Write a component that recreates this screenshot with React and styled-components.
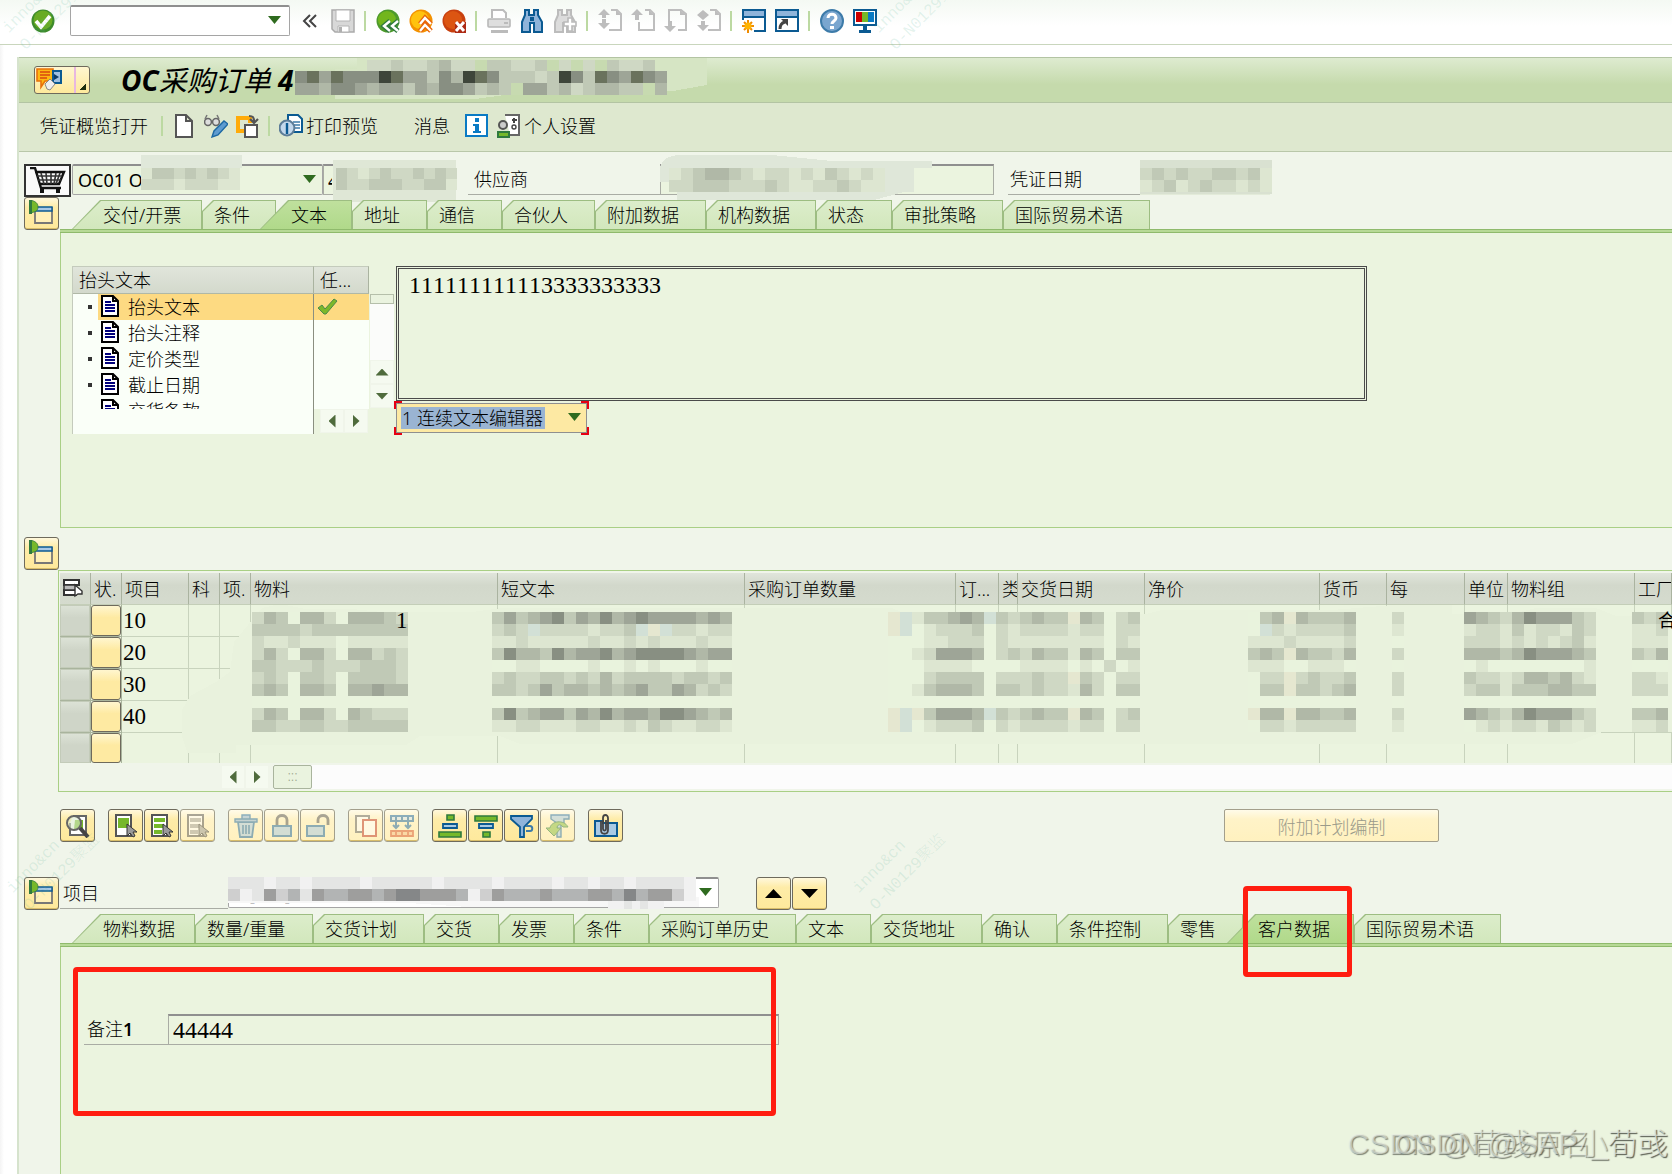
import { useState } from "react";
import styled, { createGlobalStyle, css } from "styled-components";

const headTabs = ["交付/开票", "条件", "文本", "地址", "通信", "合伙人", "附加数据", "机构数据", "状态", "审批策略", "国际贸易术语"];
const headWidths = [130, 74, 92, 75, 75, 93, 111, 110, 76, 111, 147];
const itemTabs = ["物料数据", "数量/重量", "交货计划", "交货", "发票", "条件", "采购订单历史", "文本", "交货地址", "确认", "条件控制", "零售", "客户数据", "国际贸易术语"];
const itemWidths = [123, 118, 111, 75, 75, 75, 147, 75, 111, 75, 111, 75, 127, 147];
const texts = ["抬头文本", "抬头注释", "定价类型", "截止日期", "交货条款"];
const columns = [
    ["项目", 67], ["科", 31], ["项.", 31], ["物料", 247], ["短文本", 247], ["采购订单数量", 211],
    ["订...", 43], ["类", 19], ["交货日期", 127], ["净价", 175], ["货币", 67], ["每", 78], ["单位", 43], ["物料组", 127], ["工厂", 0],
];
const traces = { 物料: ["1", 144], 工厂: ["合", 22] };

const PALETTE = {
    n: "#e9f3dd", a: "#dde6d1", b: "#cfd8c4", c: "#c0c9b6", d: "#b0b8a7", e: "#9ea597", f: "#888f82",
    g: "#6a725d", k: "#3e453a", y: "#e5e7d0", t: "#d2e0d6", m: "#c7dab0",
    1: "#f1f1f1", 2: "#e4e5e4", 3: "#cfcfcf", 4: "#b2b4b4", 5: "#9e9e9d", 6: "#858788",
};

const itemBlocks = [
    { x: 252, rows: ["bdcnddbndddcb", "ccccbcccccccc", "baabaaanaaaaa", "bdbnddbnddbcb", "ccbbbcbbbcccb", "bcbnccbnccccb", "cdcnddcnddedd", "nnnnnnnnnnnnn", "bdcnddbndcbbb", "ccbbccbbccccc"] },
    { x: 492, rows: ["cecdefcedfdefeeeeded", "bcbtbbbbabbctytbbabb", "aabaaaaabaababaaabaa", "cfddcfdeefdeffffedee", "nnaannnnannanannnann", "bcbbccbcbdbccccbccbc", "ccbcecddcdcdeccedbcb", "nnnnnnnnnnnnnnnnnnnn", "cfcdeecedfdeedffedcd", "aabbaaabbaabacbaabba"] },
    { x: 888, rows: ["ytaccdedtcbcdccydcnbc", "ytnabbbcnbabbbbabbnbb", "nnnaabbbnbaaaaaaaanba", "nnabeeednbcbdccadcncc", "nnnaaaannnnaaaananbna", "nnnbccccnbbbcbbycbnbb", "nnacdddcnccbcbbadbncc", "nnnnnnnnnnnnnnnnnnnnn", "ytyceeedtcbcdccydcnbc", "ytnabbbcnbabbbbabbnbb"] },
    { x: 1248, rows: ["ncdydcccd", "ntbabbbbc", "aaabaaaab", "cdcydccbd", "aaannaaan", "nbbybcbbc", "nccyccbcd", "nnnnnnnnn", "yddyddccd", "nbbabbbbb"] },
    { x: 1392, rows: ["b", "a", "n", "b", "n", "b", "b", "n", "b", "a"] },
    { x: 1464, rows: ["edcbdfeeecb", "abbacabbacb", "bbbabababca", "dddcdfeeedc", "nannnnnnnna", "cbbabddcdba", "bccacccddcc", "nnnnnnnnnnn", "edcbdfeeecb", "nababbacbab"] },
    { x: 1632, rows: ["cbc", "aab", "aaa", "cbd", "nnn", "bba", "bbb", "nnn", "ccd", "aab"] },
];

const icons = {
    ok: <><circle cx="12" cy="12" r="11.5" fill="#3d8b2b" /><circle cx="12" cy="11" r="9.5" fill="#68ab23" /><path d="M5 12l5 6 9-11" fill="none" stroke="#fff" strokeWidth="3.6" /></>,
    save: <><path d="M1 1h22v22H4l-3-3z" fill="#d8d8d8" stroke="#aaa" strokeWidth="1.5" /><path d="M5 1h14v11H5z" fill="#fff" stroke="#b4b4b4" /><path d="M7 17h11v6H7z" fill="#fff" stroke="#b4b4b4" /><path d="M8 18h3v5H8z" fill="#b0b0b0" /></>,
    back: <><circle cx="12" cy="12" r="11.5" fill="#4d9a2c" /><circle cx="11" cy="11" r="9" fill="#72b61d" /><path d="M14 12l-6 5 6 5M22 12l-6 5 6 5" fill="none" stroke="#2f7a3e" strokeWidth="5" /><path d="M14 12l-6 5 6 5M22 12l-6 5 6 5" fill="none" stroke="#fff" strokeWidth="2.4" /></>,
    up: <><circle cx="12" cy="12" r="11.5" fill="#f39200" /><circle cx="11" cy="11" r="9" fill="#ffc20e" /><path d="M11 15l5-6 6 6M11 22l5-6 6 6" fill="none" stroke="#e8650a" strokeWidth="5" /><path d="M11 15l5-6 6 6M11 22l5-6 6 6" fill="none" stroke="#fff" strokeWidth="2.4" /></>,
    cancel: <><circle cx="12" cy="12" r="11.5" fill="#c8400f" /><circle cx="11" cy="11" r="9" fill="#dc5512" /><path d="M13 13h11v11H13z" fill="#ad2a14" /><path d="M14 13l8 9M22 13l-8 9" stroke="#fff" strokeWidth="3" /></>,
    print: <><path d="M5 9V1h11l3 3v5M5 1v8" fill="#fff" stroke="#bcbcbc" strokeWidth="2" /><rect x="1" y="10" width="22" height="8" rx="1" fill="#dedede" stroke="#b8b8b8" strokeWidth="1.6" /><path d="M17 13h4v2h-4zM4 21h17v3H4z" fill="#bbb" /></>,
    find: <><path d="M5 1h4v5h5V1h4v5l4 7v10h-8v-9h-4v9H2V13l3-7z" fill="#8fb4da" stroke="#0b5a92" strokeWidth="2" /><path d="M10 8h4v4h-4z" fill="#0b5a92" /></>,
    findNext: <><path d="M5 1h4v5h5V1h4v5l4 7v10h-8v-9h-4v9H2V13l3-7z" fill="#dcdcdc" stroke="#bcbcbc" strokeWidth="2" /><path d="M15 9h4v4h4v4h-4v5h-4v-5h-4v-4h4z" fill="#fff" stroke="#bababa" strokeWidth="1.6" /></>,
    first: <><path d="M13 1h6l4 4v16H11" fill="none" stroke="#bebebe" strokeWidth="2" /><path d="M18 1v5h5M6 0l6 6H8v3H4V6H0zM4 10h4v2H4zM0 14h4v-2h4v2h4l-6 6z" fill="#bdbdbd" /></>,
    prev: <><path d="M14 1h5l4 4v16H8v-8" fill="none" stroke="#bebebe" strokeWidth="2" /><path d="M18 1v5h5M6 0l6 6H8v5H4V6H0z" fill="#bdbdbd" /></>,
    next: <><path d="M5 12V1h12l5 4v16h-8" fill="none" stroke="#bebebe" strokeWidth="2" /><path d="M16 1v5h6M4 12h4v5h4l-6 6-6-6h4z" fill="#bdbdbd" /></>,
    last: <><path d="M13 1h6l4 4v16H11" fill="none" stroke="#bebebe" strokeWidth="2" /><path d="M18 1v5h5M6 1l6 5-6 5-6-5zM4 12h4v4h4l-6 6-6-6h4z" fill="#bdbdbd" /></>,
    session: <><path d="M1 1h22v21H1z" fill="#fff" stroke="#0b5a92" strokeWidth="2" /><path d="M2 2h20v5H2z" fill="#8fb4da" /><path d="M0 7h24v2H0z" fill="#0b5a92" /><path d="M0 11h12v13H0z" fill="#fff" /><path d="M6 11v13M0 17h12M2 13l8 8M10 13l-8 8" stroke="#f08c00" strokeWidth="2" /><circle cx="6" cy="17" r="3.5" fill="#ffb400" /></>,
    shortcut: <><path d="M1 1h22v21H1z" fill="#fff" stroke="#0b5a92" strokeWidth="2" /><path d="M2 2h20v5H2z" fill="#8fb4da" /><path d="M0 7h24v2H0z" fill="#0b5a92" /><path d="M5 20c0-4 1-6 5-7" stroke="#444" strokeWidth="3" fill="none" /><path d="M6 10h7v7z" fill="#444" /></>,
    help: <><circle cx="12" cy="12" r="11" fill="#7aa6cf" stroke="#3d7ba9" strokeWidth="2" /><path d="M8 9c0-5 8-5 8 0 0 3-4 3-4 6" fill="none" stroke="#fff" strokeWidth="3" /><path d="M10 17h4v3h-4z" fill="#fff" /></>,
    monitor: <><path d="M1 1h22v15H1z" fill="#fff" stroke="#0b5a92" strokeWidth="2" /><path d="M3 3h6v10H3z" fill="#c00" /><path d="M9 3h6v10H9z" fill="#76b82a" /><path d="M15 3h6v10h-6z" fill="#0a7ac4" /><path d="M10 17h4v4h4v3H6v-3h4z" fill="#0b5a92" /></>,
    services: <><path d="M1 1h16v12H9l-4 6v-6H1z" fill="#fdb913" stroke="#e8710a" strokeWidth="1.6" /><path d="M4 4h10M4 7h10M4 10h7" stroke="#d9480f" strokeWidth="1.4" /><path d="M17 3h8v12h-8z" fill="#9dc0e0" stroke="#0b5a92" strokeWidth="2" /><path d="M18 6l5 3-5 3z" fill="#0b3c66" /><path d="M9 16l5-5 5 5-5 6-3-1z" fill="#eee" stroke="#888" /></>,
    page: <path d="M4 1h10l6 6v16H4zM14 1v6h6" fill="#fff" stroke="#555" strokeWidth="2" />,
    change: <><circle cx="4" cy="8" r="3.4" fill="#ddd" stroke="#666" strokeWidth="1.5" /><circle cx="12" cy="8" r="3.4" fill="#ddd" stroke="#666" strokeWidth="1.5" /><path d="M1 5l2-4M15 5l-2-4" stroke="#777" strokeWidth="1.5" /><path d="M8 23l2-6L20 7l4 3-10 11z" fill="#5e9bd0" stroke="#1d68a3" strokeWidth="1.4" /></>,
    other: <><path d="M9 17H2V4h12v5" fill="none" stroke="#ffab0a" strokeWidth="4" /><path d="M9 11h12v12H9z" fill="#fff" stroke="#555" strokeWidth="2" /><path d="M13 2c4 0 5 1 5 6M14 5l4 4 4-4" stroke="#555" strokeWidth="2.2" fill="none" /></>,
    preview: <><path d="M9 1h10l4 4v13H9z" fill="#fff" stroke="#0b5a92" strokeWidth="2" /><path d="M14 8h7M14 11h7M14 14h7" stroke="#3d7ba9" strokeWidth="1.5" /><circle cx="8" cy="14" r="7.4" fill="#c3d8ec" stroke="#5d7d98" strokeWidth="2" /><path d="M8 9v11" stroke="#0b5a92" strokeWidth="2.4" /></>,
    info: <><path d="M1 1h21v21H1z" fill="#fff" stroke="#0a7ac4" strokeWidth="2" /><path d="M10 4h4v4h-4zM8 10h6v7h2v2H8v-2h2v-5H8z" fill="#0a7ac4" /></>,
    person: <><path d="M8 1h14v20h-9" fill="#fff" stroke="#666" strokeWidth="2" /><path d="M17 4v5M15 6h5" stroke="#444" strokeWidth="2" /><circle cx="17" cy="13" r="2" fill="none" stroke="#444" strokeWidth="1.4" /><circle cx="6" cy="11" r="4" fill="#ccc" stroke="#555" strokeWidth="2" /><path d="M1 18h11v5H1z" fill="#76b82a" stroke="#2f7a3e" strokeWidth="2" /></>,
    cart: <><path d="M1 1h5l6 20h20M6 5h29l-5 12H11" fill="none" stroke="#111" strokeWidth="2.4" /><path d="M12 6l3 11M17 6l1 11M22 6v11M27 6l-2 11M31 6l-4 11M8 9h25M9 13h23" stroke="#333" strokeWidth="1.6" /><path d="M11 22h4v4h-4zM27 22h4v4h-4z" fill="#111" /></>,
    toggle: <><path d="M6 8h17v15H6z" fill="#fff0b8" stroke="#777" strokeWidth="1.8" /><path d="M6 7h17v4H6z" fill="#a9c8e6" stroke="#0b5a92" strokeWidth="1.4" /><path d="M1 0c5 1 8 3 8 7s-3 5-8 6z" fill="#76b82a" stroke="#2f7a3e" strokeWidth=".8" /><path d="M0 0h3v14H0z" fill="#2f7a3e" /></>,
    detail: <><path d="M7 2h13v19H4V9" fill="#fff" stroke="#666" strokeWidth="2" /><path d="M9 6h8v9H8z" fill="#76b82a" /><circle cx="8" cy="9" r="7" fill="#dcebcd" fillOpacity=".6" stroke="#666" strokeWidth="2" /><path d="M14 14l8 9" stroke="#444" strokeWidth="4" /></>,
    selectAll: <><path d="M2 1h15v21H2z" fill="#fff" stroke="#555" strokeWidth="2" /><path d="M4 4h11v10H4z" fill="#76b82a" /><path d="M13 10v12l3-3 3 4 2-1-2-4h4z" fill="#999" stroke="#333" /></>,
    selectBlock: <><path d="M2 1h15v21H2z" fill="#fff" stroke="#555" strokeWidth="2" /><path d="M4 4h11v4H4zM4 10h9v4H4zM4 16h8v4H4z" fill="#76b82a" /><path d="M13 10v12l3-3 3 4 2-1-2-4h4z" fill="#999" stroke="#333" /></>,
    trash: <><path d="M4 8h16l-2 15H6z" fill="#a9cae4" stroke="#1d68a3" strokeWidth="1.8" /><path d="M1 5h22v3H1zM8 1h8v4H8z" fill="#8fb4da" stroke="#1d68a3" strokeWidth="1.4" /><path d="M9 11v9M12 11v9M15 11v9" stroke="#1d68a3" strokeWidth="1.6" /></>,
    lock: <><path d="M7 12V6c0-6 10-6 10 0v6" fill="none" stroke="#555" strokeWidth="2.8" /><path d="M3 12h18v10H3z" fill="#a9cae4" stroke="#1d68a3" strokeWidth="2" /></>,
    unlock: <><path d="M12 9V6c0-6 10-6 10 0v5" fill="none" stroke="#555" strokeWidth="2.8" /><path d="M1 12h17v10H1z" fill="#a9cae4" stroke="#1d68a3" strokeWidth="2" /></>,
    copy: <><path d="M8 18H2V2h13v3" fill="#fff" stroke="#666" strokeWidth="2" /><path d="M9 6h13v16H9z" fill="#fff" stroke="#c0392b" strokeWidth="2" /></>,
    split: <><path d="M1 2h22v5H1zM6 2v5M12 2v5M18 2v5" fill="#d7e6f3" stroke="#1d68a3" strokeWidth="2" /><path d="M6 8v6M3 11l3 3 3-3M18 8v6M15 11l3 3 3-3" fill="none" stroke="#1d68a3" strokeWidth="2" /><path d="M1 17h22v5H1zM6 17v5M12 17v5M18 17v5" fill="#f6c08a" stroke="#d9542b" strokeWidth="1.8" /></>,
    sortUp: <><path d="M9 1h7v5H9zM1 18h22v5H1z" fill="#76b82a" stroke="#2f7a3e" strokeWidth="1.6" /><path d="M5 10h14v4H5z" fill="#a9cae4" stroke="#0b5a92" strokeWidth="1.8" /></>,
    sortDown: <><path d="M1 2h22v5H1zM9 18h7v5H9z" fill="#76b82a" stroke="#2f7a3e" strokeWidth="1.6" /><path d="M5 10h14v4H5z" fill="#a9cae4" stroke="#0b5a92" strokeWidth="1.8" /></>,
    filter: <><path d="M1 2h21v3l-8 8v10h-4V13L1 5z" fill="#8fb4da" stroke="#0b5a92" strokeWidth="1.8" /><path d="M16 12h4c3 0 3 5 0 5h-4" fill="none" stroke="#3d7ba9" strokeWidth="2" /></>,
    unfilter: <><path d="M5 1h18v4h-5v4h-3v14h-4V9L5 5z" fill="#a9cae4" stroke="#1d68a3" strokeWidth="1.4" /><path d="M0 14h4c1-7 14-9 18-1h-5c-3-4-6-2-6 1h4l-7 8z" fill="#8abf45" stroke="#2f7a3e" /></>,
    attach: <><path d="M1 7h8v2h14v13H1z" fill="#a9cae4" stroke="#0b5a92" strokeWidth="2" /><path d="M7 7v9c0 5 7 5 7 0V4c0-4-5-4-5 0v11c0 2 3 2 3 0V6" fill="none" stroke="#444" strokeWidth="1.8" /></>,
    text: <><path d="M1 1h11l5 5v15H1z" fill="#fff" stroke="#000" strokeWidth="2" /><path d="M12 1v5h5" fill="none" stroke="#000" strokeWidth="2" /><path d="M4 7h6M4 10h10M4 13h10M4 16h10" stroke="#00007b" strokeWidth="1.8" /></>,
    tick: <path d="M1 10l4-3 3 4 9-10 3 2L9 16H7z" fill="#7cb82a" stroke="#4a8a4a" />,
    layout: <><path d="M1 1h15v5H1zM1 11h12v5H1z" fill="#fff" stroke="#333" strokeWidth="2" /><path d="M1 6h12v5H1z" fill="#bbb" stroke="#333" strokeWidth="1.5" /><path d="M12 6v11l3-2h4v-3z" fill="#fff" stroke="#333" strokeWidth="1.4" /></>,
};

function Icon({ name, size = 24, width }) {
    return (
        <svg width={width || size} height={size} viewBox={`0 0 ${width || 24} ${width ? size : 24}`} aria-hidden="true">{icons[name]}</svg>
    );
}

function Mosaic({ rows, x = 0, y = 0, cell = 12 }) {
    return rows.map((row, r) => [...row].map((key, c) => (
        key !== "." && <rect key={`${r}-${c}`} x={x + c * cell} y={y + r * cell} width={cell} height={cell} fill={PALETTE[key]} />
    )));
}

function Tabs({ labels, widths, start }) {
    const [active, setActive] = useState(start);
    return (
        <TabStrip role="tablist">
            {labels.map((label, i) => (
                <Tab key={label} role="tab" aria-selected={i === active} $active={i === active} $overlap={i === active && i > 0} $first={i === 0} $wide={widths[i]} onClick={() => setActive(i)}>
                    <span>{label}</span>
                </Tab>
            ))}
        </TabStrip>
    );
}

function Stamp({ left, top }) {
    return <StampText $left={left} $top={top} aria-hidden="true">inno&amp;cn<br />O-N0129聚监</StampText>;
}

export default function App() {
    const [note, setNote] = useState("44444");
    const [body, setBody] = useState("111111111113333333333");

    return (
        <Page>
            <GlobalStyle />
            <TopBar>
                <IconButton aria-label="确认"><Icon name="ok" /></IconButton>
                <SelectBox $width={220} $white $command>
                    <select aria-label="命令"><option></option></select>
                </SelectBox>
                <Collapse aria-label="收起">
                    <svg width="16" height="14" aria-hidden="true"><path d="M8 1L2 7l6 6M14 1L8 7l6 6" fill="none" stroke="#444" strokeWidth="2" /></svg>
                </Collapse>
                <IconButton aria-label="保存"><Icon name="save" /></IconButton>
                <Divider />
                <IconButton aria-label="返回"><Icon name="back" /></IconButton>
                <IconButton aria-label="退出"><Icon name="up" /></IconButton>
                <IconButton aria-label="取消"><Icon name="cancel" /></IconButton>
                <Divider />
                <IconButton aria-label="打印"><Icon name="print" /></IconButton>
                <IconButton aria-label="查找"><Icon name="find" /></IconButton>
                <IconButton aria-label="继续查找"><Icon name="findNext" /></IconButton>
                <Divider />
                <IconButton aria-label="首页"><Icon name="first" /></IconButton>
                <IconButton aria-label="上一页"><Icon name="prev" /></IconButton>
                <IconButton aria-label="下一页"><Icon name="next" /></IconButton>
                <IconButton aria-label="末页"><Icon name="last" /></IconButton>
                <Divider />
                <IconButton aria-label="新会话"><Icon name="session" /></IconButton>
                <IconButton aria-label="快捷方式"><Icon name="shortcut" /></IconButton>
                <Divider />
                <IconButton aria-label="帮助"><Icon name="help" /></IconButton>
                <IconButton aria-label="布局"><Icon name="monitor" /></IconButton>
            </TopBar>

            <Frame>
                <TitleBar>
                    <ServiceButton aria-label="服务">
                        <Icon name="services" width={28} />
                        <i />
                    </ServiceButton>
                    <h1>OC<span>采购订单</span> 4</h1>
                    <svg width="412" height="46" viewBox="0 0 412 46" shapeRendering="crispEdges" aria-hidden="true">
                        <path d="M62 -4h350v32l-34 6H240l-60 8H40V12h22z" fill="#d6e5c4" />
                        <Mosaic y={3} rows={["......bbcbbcdbbmccbbcmbmbmcbbc"]} />
                        <Mosaic y={14} rows={["fgegfffkgeecfdkgfcccbckfcgfegfe", "eedffedeecedffecdcmeecdbcddccmd"]} />
                    </svg>
                </TitleBar>
                <ActionBar>
                    <TextButton>凭证概览打开</TextButton>
                    <Divider $push />
                    <IconButton aria-label="新建"><Icon name="page" /></IconButton>
                    <IconButton aria-label="显示/更改"><Icon name="change" /></IconButton>
                    <IconButton aria-label="其他订单"><Icon name="other" /></IconButton>
                    <Divider />
                    <TextButton><Icon name="preview" />打印预览</TextButton>
                    <Messages>消息</Messages>
                    <IconButton aria-label="信息"><Icon name="info" /></IconButton>
                    <TextButton><Icon name="person" />个人设置</TextButton>
                </ActionBar>

                <HeaderRow>
                    <CartBox><Icon name="cart" width={38} size={27} /></CartBox>
                    <SelectBox $width={251}>
                        <select aria-label="订单类型"><option>OC01 O</option></select>
                    </SelectBox>
                    <Field $width={14}><input aria-label="订单号" defaultValue="4" /></Field>
                    <FieldLabel $width={192} htmlFor="vendor">供应商</FieldLabel>
                    <Field $width={334}><input id="vendor" /></Field>
                    <DateLabel $width={132} htmlFor="docdate">凭证日期</DateLabel>
                    <HiddenDate id="docdate" readOnly />
                    <Redaction $left={122} $top={2}>
                        <svg width="1134" height="48" shapeRendering="crispEdges" aria-hidden="true">
                            <path d="M0 1h101v13H0z" fill="#e0e8da" />
                            <Mosaic y={14} rows={["accbcbcba", "bbbabbbaa"]} cell={11} />
                            <path d="M192 6h123v42H192z" fill="#dfe7d6" />
                            <Mosaic x={195} y={14} rows={["cbabcbbcbcb", "cbbcccbbcca"]} cell={11} />
                            <path d="M519 14q2-13 22-13h90l60 6h100v7h-18v24h-10l-30 8H536V28h-17z" fill="#dfe7d9" />
                            <Mosaic x={528} y={14} rows={["abcddcbabbabacbaba", "bbcccbbbcbaabbcbaa"]} />
                            <path d="M999 6h132v34H999z" fill="#d9e1d1" />
                            <Mosaic x={999} y={14} rows={["bcbcbbccbca", "abcabcbbaba"]} />
                        </svg>
                    </Redaction>
                </HeaderRow>

                <Section>
                    <ToggleButton aria-label="折叠抬头"><Icon name="toggle" /></ToggleButton>
                    <div>
                        <Tabs labels={headTabs} widths={headWidths} start={2} />
                        <HeadPanel>
                            <Tree>
                                <TreeRows>
                                    <table>
                                        <thead>
                                            <tr><th>抬头文本</th><th>任...</th></tr>
                                        </thead>
                                        <tbody>
                                            {texts.map((t, i) => (
                                                <TreeRow key={t} $selected={i === 0}>
                                                    <td><div><b /><span><Icon name="text" width={20} />{t}</span></div></td>
                                                    <td>{i === 0 && <svg width="21" height="18" aria-hidden="true">{icons.tick}</svg>}</td>
                                                </TreeRow>
                                            ))}
                                        </tbody>
                                    </table>
                                </TreeRows>
                                <TreeFoot>
                                    <span />
                                    <ArrowButton $dir="left" aria-label="向左" />
                                    <ArrowButton $dir="right" aria-label="向右" />
                                </TreeFoot>
                            </Tree>
                            <TreeScroll>
                                <TreeTrack><i /></TreeTrack>
                                <ArrowButton $dir="up" aria-label="向上" />
                                <ArrowButton $dir="down" aria-label="向下" />
                            </TreeScroll>
                            <Editor>
                                <textarea aria-label="文本内容" value={body} onChange={(e) => setBody(e.target.value)} />
                                <ModeSelect>
                                    <select aria-label="编辑器"><option>1 连续文本编辑器</option></select>
                                    <mark aria-hidden="true" />
                                </ModeSelect>
                            </Editor>
                        </HeadPanel>
                    </div>
                </Section>

                <ItemToggle><ToggleButton aria-label="折叠项目"><Icon name="toggle" /></ToggleButton></ItemToggle>
                <TableBox>
                    <ItemTable>
                        <colgroup>
                            <col style={{ width: 31 }} />
                            <col style={{ width: 31 }} />
                            {columns.map(([name, w]) => <col key={name} style={{ width: w || "auto" }} />)}
                        </colgroup>
                        <thead>
                            <tr>
                                <th><svg width="20" height="20" aria-hidden="true">{icons.layout}</svg></th>
                                <th>状.</th>
                                {columns.map(([name]) => <th key={name}>{name}</th>)}
                            </tr>
                        </thead>
                        <tbody>
                            {["10", "20", "30", "40", ""].map((no) => (
                                <tr key={no}>
                                    <td><RowKey aria-label={`选择 ${no}`} /></td>
                                    <td><StatusKey aria-label={`状态 ${no}`} /></td>
                                    <td>{no}</td>
                                    {columns.slice(1).map(([name]) => (
                                        <td key={name}>
                                            {no === "10" && traces[name] && <Trace $indent={traces[name][1]} $small={name === "工厂"}>{traces[name][0]}</Trace>}
                                        </td>
                                    ))}
                                </tr>
                            ))}
                        </tbody>
                    </ItemTable>
                    <Redaction $left={0} $top={34}>
                        <svg width="1614" height="148" viewBox="59 605 1614 148" shapeRendering="crispEdges" aria-hidden="true">
                            <path d="M262 608l18-4 26 5h46l30 3h90l30-4h390l14 6h240l16-4h170l100-8h20v12h60l24-6 60 0 20 8h56V732h-70l-30 12H520l-20-8h-80l-14 9H236V754H188l-6-18v-26l8-14 26-14 14-10 4-30z" fill="#e9f2dd" />
                            {itemBlocks.map((b) => <Mosaic key={b.x} x={b.x} y={612} rows={b.rows} />)}
                        </svg>
                    </Redaction>
                    <TableScroll>
                        <ArrowButton $dir="left" aria-label="向左滚动" />
                        <ArrowButton $dir="right" aria-label="向右滚动" />
                        <div><i>:::</i></div>
                    </TableScroll>
                </TableBox>

                <ItemTools>
                    <ToolGroup><YellowButton aria-label="明细"><Icon name="detail" /></YellowButton></ToolGroup>
                    <ToolGroup>
                        <YellowButton aria-label="全选"><Icon name="selectAll" /></YellowButton>
                        <YellowButton aria-label="选择块"><Icon name="selectBlock" /></YellowButton>
                        <YellowButton disabled $gray aria-label="取消选择"><Icon name="selectBlock" /></YellowButton>
                    </ToolGroup>
                    <ToolGroup>
                        <YellowButton disabled aria-label="删除"><Icon name="trash" /></YellowButton>
                        <YellowButton disabled aria-label="锁定"><Icon name="lock" /></YellowButton>
                        <YellowButton disabled aria-label="解锁"><Icon name="unlock" /></YellowButton>
                    </ToolGroup>
                    <ToolGroup>
                        <YellowButton disabled aria-label="复制"><Icon name="copy" /></YellowButton>
                        <YellowButton disabled aria-label="拆分"><Icon name="split" /></YellowButton>
                    </ToolGroup>
                    <ToolGroup>
                        <YellowButton aria-label="升序"><Icon name="sortUp" /></YellowButton>
                        <YellowButton aria-label="降序"><Icon name="sortDown" /></YellowButton>
                        <YellowButton aria-label="过滤"><Icon name="filter" /></YellowButton>
                        <YellowButton disabled aria-label="删除过滤"><Icon name="unfilter" /></YellowButton>
                    </ToolGroup>
                    <ToolGroup><YellowButton aria-label="附件"><Icon name="attach" /></YellowButton></ToolGroup>
                    <PlanButton disabled>附加计划编制</PlanButton>
                </ItemTools>

                <ItemRow>
                    <ToggleButton aria-label="折叠明细"><Icon name="toggle" /></ToggleButton>
                    <ItemLabel htmlFor="item">项目</ItemLabel>
                    <SelectBox $width={491} $white>
                        <select id="item"><option>1 [ 10 ]</option></select>
                    </SelectBox>
                    <StepButton aria-label="上一项目" $up />
                    <StepButton aria-label="下一项目" />
                    <Redaction $left={209} $top={0}>
                        <svg width="471" height="33" shapeRendering="crispEdges" aria-hidden="true">
                            <path d="M0 20h471v10H240L180 26H0z" fill="#f7f7f7" />
                            <Mosaic rows={["222122122221222221222212222122122122221", "312534254455456655541354445444554645531"]} />
                            <Mosaic x={380} y={24} rows={["1121211"]} cell={8} />
                        </svg>
                    </Redaction>
                </ItemRow>

                <DetailSection>
                    <Tabs labels={itemTabs} widths={itemWidths} start={12} />
                    <DetailPanel>
                        <NoteLabel $width={84} htmlFor="note">备注<b>1</b></NoteLabel>
                        <Field $width={611}><input id="note" value={note} onChange={(e) => setNote(e.target.value)} /></Field>
                    </DetailPanel>
                    <RedFrame $left={13} $top={56} $width={703} $height={149} />
                    <RedFrame $left={1183} $top={-25} $width={109} $height={91} />
                </DetailSection>
            </Frame>

            <Stamp left={0} top={-20} />
            <Stamp left={870} top={-20} />
            <Stamp left={4} top={840} />
            <Stamp left={850} top={840} />
            <Credit>CSDN @荀彧原名_荀彧</Credit>
            <Credit>CSDN @SAP小荀彧</Credit>
        </Page>
    );
}

const GlobalStyle = createGlobalStyle`
    * { box-sizing: border-box; }
    body {
        margin: 0;
        overflow-x: hidden;
        background: #ffffff;
        font-family: "Noto Sans", "Noto Sans CJK SC", sans-serif;
        font-size: 18px;
        font-weight: 300;
        font-kerning: none;
        color: #000;
    }
    button, input, select, textarea { font: inherit; font-kerning: none; color: inherit; }
    button { padding: 0; border: 0; background: none; white-space: nowrap; }
    svg { display: block; flex: none; }
`
const Page = styled.div`
    position: relative;
    display: flex;
    flex-direction: column;
    min-height: 100vh;
    overflow: hidden;
    background: linear-gradient(to right, #f4f4f4 0, #ffffff 4px, #ffffff 100%);
`
const TopBar = styled.header`
    display: flex;
    align-items: center;
    gap: 9px;
    height: 45px;
    padding: 0 0 3px 31px;
    margin-bottom: 12px;
    background: linear-gradient(#f4f9f3, #ffffff 60%);
    border-bottom: 1px solid #c9d6bd;
`
const IconButton = styled.button`
    display: flex;
    width: 24px;
    height: 24px;
`
const Collapse = styled.button`
    width: 20px;
    margin-left: 3px;
`
const Divider = styled.span`
    width: 2px;
    height: 20px;
    margin-left: ${p => p.$push ? 5 : 0}px;
    margin-right: 1px;
    background: #bcd9a2;
`
const SelectBox = styled.div`
    position: relative;
    flex: none;
    width: ${p => p.$width}px;
    height: 31px;
    margin-left: ${p => p.$command ? 6 : 0}px;
    select {
        width: 100%;
        height: 100%;
        padding: 0 30px 0 5px;
        appearance: none;
        border: 1px solid #a5a5a5;
        border-top: 2px solid #8f8f8f;
        border-radius: 2px;
        background: ${p => p.$white ? "#ffffff" : "#ebf4df"};
        font-weight: 400;
    }
    &::after {
        content: "";
        position: absolute;
        right: ${p => p.$command ? 9 : 7}px;
        top: 11px;
        width: 13px;
        height: 8px;
        background: #2f6b1f;
        clip-path: polygon(0 0, 100% 0, 50% 100%);
        pointer-events: none;
    }
`
const Frame = styled.main`
    display: flex;
    flex: 1;
    flex-direction: column;
    margin-left: 17px;
    border-left: 2px solid #d6e3cd;
    background: #f0f5ea;
`
const TitleBar = styled.div`
    display: flex;
    align-items: center;
    height: 46px;
    padding-left: 15px;
    overflow: hidden;
    border-top: 1px solid #b3c4a3;
    border-bottom: 1px solid #b3c4a3;
    background: linear-gradient(#deebd0, #c5daac 60%);
    h1 {
        margin: 0 0 0 31px;
        width: 174px;
        font-size: 28px;
        line-height: 44px;
        font-weight: 700;
        font-style: italic;
        white-space: nowrap;
    }
    span { font-weight: 400; }
`
const ServiceButton = styled.button`
    position: relative;
    display: flex;
    align-items: center;
    width: 56px;
    height: 28px;
    padding-left: 1px;
    border: 1px solid #6e6a5c;
    border-radius: 3px;
    background: linear-gradient(#fff6d0, #fee99c);
    i {
        width: 14px;
        height: 26px;
        margin-left: 10px;
        border-left: 2px solid #e8b8e0;
        background: linear-gradient(135deg, transparent 50%, #1f2f10 50%) 4px 17px / 6px 6px no-repeat;
    }
`
const ActionBar = styled.div`
    display: flex;
    align-items: center;
    gap: 8px;
    height: 49px;
    padding: 0 0 2px 21px;
    background: #dee8cf;
    border-bottom: 1px solid #b9c7a9;
`
const TextButton = styled.button`
    display: flex;
    align-items: center;
    gap: 3px;
    line-height: 24px;
`
const Messages = styled(TextButton)`
    margin: 0 7px 0 28px;
`
const HeaderRow = styled.div`
    position: relative;
    display: flex;
    height: 45px;
    padding: 12px 0 0 5px;
`
const CartBox = styled.div`
    display: flex;
    justify-content: center;
    align-items: center;
    width: 47px;
    height: 33px;
    margin-right: 1px;
    border: 2px solid #333;
    background: #fafafa;
    overflow: hidden;
`
const Field = styled.div`
    flex: none;
    width: ${p => p.$width}px;
    height: 31px;
    input {
        width: 100%;
        height: 100%;
        padding: 0 4px;
        border: 1px solid #a9aca4;
        border-top: 2px solid #8f8f8f;
        background: #ebf4df;
        font-family: "Liberation Serif", serif;
        font-size: 24px;
        font-weight: 400;
    }
`
const FieldLabel = styled.label`
    flex: none;
    width: ${p => p.$width}px;
    height: 31px;
    padding-left: 6px;
    margin-left: 131px;
    line-height: 30px;
    border-bottom: 1px solid #a9aca4;
`
const DateLabel = styled(FieldLabel)`
    margin-left: 14px;
    padding-left: 2px;
`
const HiddenDate = styled.input`
    width: 130px;
    height: 31px;
    border: 0;
    background: #e3ebd9;
`
const Redaction = styled.div`
    position: absolute;
    left: ${p => p.$left}px;
    top: ${p => p.$top}px;
    pointer-events: none;
`
const Section = styled.section`
    display: grid;
    grid-template-columns: 36px minmax(0, 1fr);
    padding-left: 5px;
`
const yellow = css`
    display: flex;
    justify-content: center;
    align-items: center;
    flex: none;
    width: 35px;
    height: 33px;
    border: 1px solid #6e6a5c;
    border-radius: 3px;
    background: linear-gradient(#fff8dc, #feeca8 30%, #fee99c);
    box-shadow: inset 0 -1px 0 #d8bd6a;
`
const ToggleButton = styled.button`
    ${yellow}
    padding: 0 1px 3px 0;
`
const YellowButton = styled.button`
    ${yellow}
    &:disabled {
        border-color: #a39f8c;
        background: linear-gradient(#fffbe9, #fff3c8 30%, #fff1bf);
        svg { opacity: .5; filter: ${p => p.$gray ? "grayscale(1)" : "none"}; }
    }
`
const TabStrip = styled.div`
    display: flex;
    padding: 3px 0 0 12px;
    border-bottom: 4px double #8fba6c;
    background: linear-gradient(#b7d996, #b7d996) bottom / 100% 4px no-repeat;
    background-origin: border-box;
`
const Tab = styled.button`
    --cut: ${p => p.$active || p.$first ? 28 : 11}px;
    --drop: ${p => p.$active || p.$first ? 100 : 38}%;
    position: relative;
    flex: none;
    width: ${p => p.$wide}px;
    height: 29px;
    margin-left: ${p => p.$overlap ? -16 : 0}px;
    padding-left: ${p => p.$active || p.$first ? 31 : 12}px;
    text-align: left;
    line-height: 30px;
    background: #9dbd82;
    clip-path: polygon(var(--cut) 0, 100% 0, 100% 100%, 0 100%, 0 var(--drop));
    &::before {
        content: "";
        position: absolute;
        inset: 1px 1px 0 1px;
        background: ${p => p.$active ? "linear-gradient(#bfe09d, #b0d98a)" : "linear-gradient(#dcedcb, #d2e7bc)"};
        clip-path: polygon(var(--cut) 0, 100% 0, 100% 100%, 0 100%, 0 var(--drop));
    }
    span { position: relative; }
`
const HeadPanel = styled.div`
    display: flex;
    align-items: flex-start;
    height: 295px;
    padding: 33px 0 0 11px;
    border-left: 1px solid #a9cf85;
    border-bottom: 1px solid #a9cf85;
    background: #ebf4df;
`
const Tree = styled.div`
    flex: none;
    width: 297px;
    background: #fafff8;
    border-left: 1px solid #c4cbbc;
`
const TreeRows = styled.div`
    height: 143px;
    overflow: hidden;
    table {
        width: 100%;
        table-layout: fixed;
        border-collapse: separate;
        border-spacing: 0;
    }
    th {
        height: 28px;
        padding: 0 6px;
        text-align: left;
        font-weight: 300;
        line-height: 26px;
        border-top: 1px solid #c4cbbc;
        border-right: 1px solid #aab3a0;
        border-bottom: 1px solid #b0b8a6;
        background: linear-gradient(#e0e5db, #d3d9cc);
    }
    th:first-child { width: 241px; }
`
const TreeRow = styled.tr`
    td { height: 26px; padding: 0; }
    td:first-child { border-right: 1px solid #8a8f80; }
    td:nth-child(2) {
        padding-left: 3px;
        background: ${p => p.$selected ? "#fdda82" : "none"};
    }
    div { display: flex; align-items: center; height: 26px; }
    b { width: 4px; height: 4px; margin: 0 6px 0 15px; background: #333; }
    span {
        display: flex;
        flex: 1;
        align-items: center;
        gap: 7px;
        height: 26px;
        padding-left: 3px;
        line-height: 24px;
        background: ${p => p.$selected ? "#fdda82" : "none"};
    }
`
const TreeFoot = styled.div`
    display: flex;
    height: 25px;
    background: #ebf4df;
    span {
        width: 241px;
        margin-right: 6px;
        border-right: 1px solid #8a8f80;
        background: #fafff8;
    }
`
const shapes = {
    left: "polygon(100% 0, 100% 100%, 0 50%)",
    right: "polygon(0 0, 100% 50%, 0 100%)",
    up: "polygon(50% 0, 100% 100%, 0 100%)",
    down: "polygon(0 0, 100% 0, 50% 100%)",
}
const ArrowButton = styled.button`
    display: flex;
    align-items: center;
    justify-content: center;
    flex: none;
    width: 24px;
    height: 24px;
    background: #f5faf0;
    border: 1px solid #f0f5ea;
    &::before {
        content: "";
        width: ${p => p.$dir === "left" || p.$dir === "right" ? 7 : 13}px;
        height: ${p => p.$dir === "left" || p.$dir === "right" ? 13 : 7}px;
        background: #4f6b3c;
        clip-path: ${p => shapes[p.$dir]};
    }
`
const TreeScroll = styled.div`
    flex: none;
    width: 27px;
    padding-top: 28px;
    padding-left: 1px;
`
const TreeTrack = styled.div`
    width: 24px;
    height: 66px;
    background: #fbfcfa;
    i {
        display: block;
        height: 10px;
        border: 1px solid #b5bfaa;
        background: #eaf3df;
    }
`
const Editor = styled.div`
    flex: 0 1 971px;
    textarea {
        display: block;
        width: 100%;
        height: 135px;
        padding: 1px 10px;
        resize: none;
        border: 3px double #4a4a4a;
        background: #ebf4df;
        font-family: "Liberation Serif", serif;
        font-size: 24px;
        line-height: 30px;
        font-weight: 400;
    }
`
const ModeSelect = styled.div`
    position: relative;
    width: 195px;
    height: 34px;
    margin-left: -2px;
    padding: 2px;
    --red: linear-gradient(#e60012, #e60012);
    background:
        var(--red) 0 0 / 8px 2px, var(--red) 0 0 / 2px 8px,
        var(--red) 100% 0 / 8px 2px, var(--red) 100% 0 / 2px 8px,
        var(--red) 0 100% / 8px 2px, var(--red) 0 100% / 2px 8px,
        var(--red) 100% 100% / 8px 2px, var(--red) 100% 100% / 2px 8px;
    background-repeat: no-repeat;
    select {
        width: 100%;
        height: 100%;
        padding: 0 0 0 5px;
        appearance: none;
        border: 1px solid #8f8f8f;
        background: linear-gradient(#9ab4d2, #9ab4d2) 4px 3px / 144px 22px no-repeat #fde9a3;
    }
    mark {
        position: absolute;
        right: 8px;
        top: 12px;
        width: 13px;
        height: 8px;
        background: #2f6b1f;
        clip-path: polygon(0 0, 100% 0, 50% 100%);
        pointer-events: none;
    }
`
const ItemToggle = styled.div`
    padding: 9px 0 0 5px;
`
const TableBox = styled.section`
    position: relative;
    margin-left: 39px;
    padding-top: 2px;
    padding-left: 1px;
    border: 1px solid #a9cf85;
    border-right: 0;
    overflow: hidden;
`
const ItemTable = styled.table`
    width: 100%;
    table-layout: fixed;
    border-collapse: separate;
    border-spacing: 0;
    th {
        height: 32px;
        padding: 0 0 0 3px;
        overflow: hidden;
        text-align: left;
        font-weight: 300;
        white-space: nowrap;
        line-height: 28px;
        border-right: 1px solid #aab3a0;
        border-bottom: 1px solid #c4ceb8;
        background: linear-gradient(#e0e5db, #d2d8cb 40%, #d5dbce);
    }
    td {
        height: 32px;
        padding: 0 0 0 1px;
        border-right: 1px solid #c8d3bd;
        border-bottom: 1px solid #c8d3bd;
        background: #ebf4df;
        font-family: "Liberation Serif", "Noto Sans CJK SC", serif;
        font-size: 23px;
        font-weight: 400;
        line-height: 28px;
    }
    td:nth-child(-n+2) { padding: 0; border-color: #a9b49d; }
    tr:last-child td { height: 30px; border-bottom: 0; }
    tr:last-child button { height: 30px; }
`
const RowKey = styled.button`
    display: block;
    width: 30px;
    height: 31px;
    border: 1px solid #c3cbb9;
    background: linear-gradient(#dce2d6, #cfd5c8 40%);
`
const StatusKey = styled.button`
    display: block;
    width: 30px;
    height: 31px;
    border: 1px solid #6e6a5c;
    border-radius: 3px;
    background: linear-gradient(#fff6cf, #feeaa2 40%);
`
const Trace = styled.span`
    position: relative;
    z-index: 1;
    display: block;
    height: 28px;
    margin-left: ${p => p.$indent}px;
    font-size: ${p => p.$small ? 18 : 23}px;
`
const TableScroll = styled.div`
    display: flex;
    height: 28px;
    padding: 2px 0 2px 161px;
    div {
        flex: 1;
        margin-left: 4px;
        background: #fcfcfc;
    }
    i {
        display: block;
        width: 39px;
        height: 24px;
        border: 1px solid #a9b49d;
        border-radius: 2px;
        background: #eaf3df;
        color: #9aa58c;
        font-size: 14px;
        line-height: 20px;
        font-style: normal;
        text-align: center;
    }
`
const ItemTools = styled.div`
    display: flex;
    gap: 13px;
    padding: 17px 0 35px 41px;
`
const ToolGroup = styled.div`
    display: flex;
    gap: 1px;
`
const PlanButton = styled.button`
    width: 215px;
    height: 33px;
    margin-left: 588px;
    border: 1px solid #a39f8c;
    border-radius: 2px;
    background: linear-gradient(#fffbe9, #fff3c8 30%, #fff1bf);
    color: #9a9a8a;
`
const ItemRow = styled.div`
    position: relative;
    display: flex;
    height: 34px;
    padding-left: 5px;
    ${SelectBox} { margin-right: 37px; }
`
const ItemLabel = styled.label`
    width: 168px;
    height: 32px;
    margin-left: 1px;
    padding-left: 3px;
    line-height: 32px;
    border-bottom: 1px solid #a9aca4;
`
const StepButton = styled.button`
    ${yellow}
    margin-right: 1px;
    &::before {
        content: "";
        width: 17px;
        height: 9px;
        background: #000;
        clip-path: ${p => p.$up ? shapes.up : shapes.down};
    }
`
const DetailSection = styled.section`
    position: relative;
    display: flex;
    flex: 1;
    flex-direction: column;
    margin-left: 41px;
`
const DetailPanel = styled.div`
    display: flex;
    flex: 1;
    padding: 67px 0 0 23px;
    border-left: 1px solid #a9cf85;
    background: #ebf4df;
`
const NoteLabel = styled(FieldLabel)`
    margin-left: 0;
    padding-left: 3px;
    b { font-weight: 600; }
`
const RedFrame = styled.div`
    position: absolute;
    left: ${p => p.$left}px;
    top: ${p => p.$top}px;
    width: ${p => p.$width}px;
    height: ${p => p.$height}px;
    border: 5px solid #ff1d10;
    border-radius: 4px;
    pointer-events: none;
`
const StampText = styled.div`
    position: absolute;
    left: ${p => p.$left}px;
    top: ${p => p.$top}px;
    font-family: "Liberation Mono", "Noto Sans CJK SC", monospace;
    font-size: 16px;
    line-height: 24px;
    color: rgba(90, 180, 150, 0.16);
    transform: rotate(-45deg);
    pointer-events: none;
`
const Credit = styled.div`
    position: absolute;
    right: 4px;
    bottom: 6px;
    font-family: "Liberation Sans", "Noto Sans CJK SC", sans-serif;
    font-size: 30px;
    line-height: 48px;
    color: rgba(235, 240, 230, 0.6);
    text-shadow: 1px 1px 1px rgba(80, 85, 75, 0.7);
    white-space: nowrap;
    pointer-events: none;
`
